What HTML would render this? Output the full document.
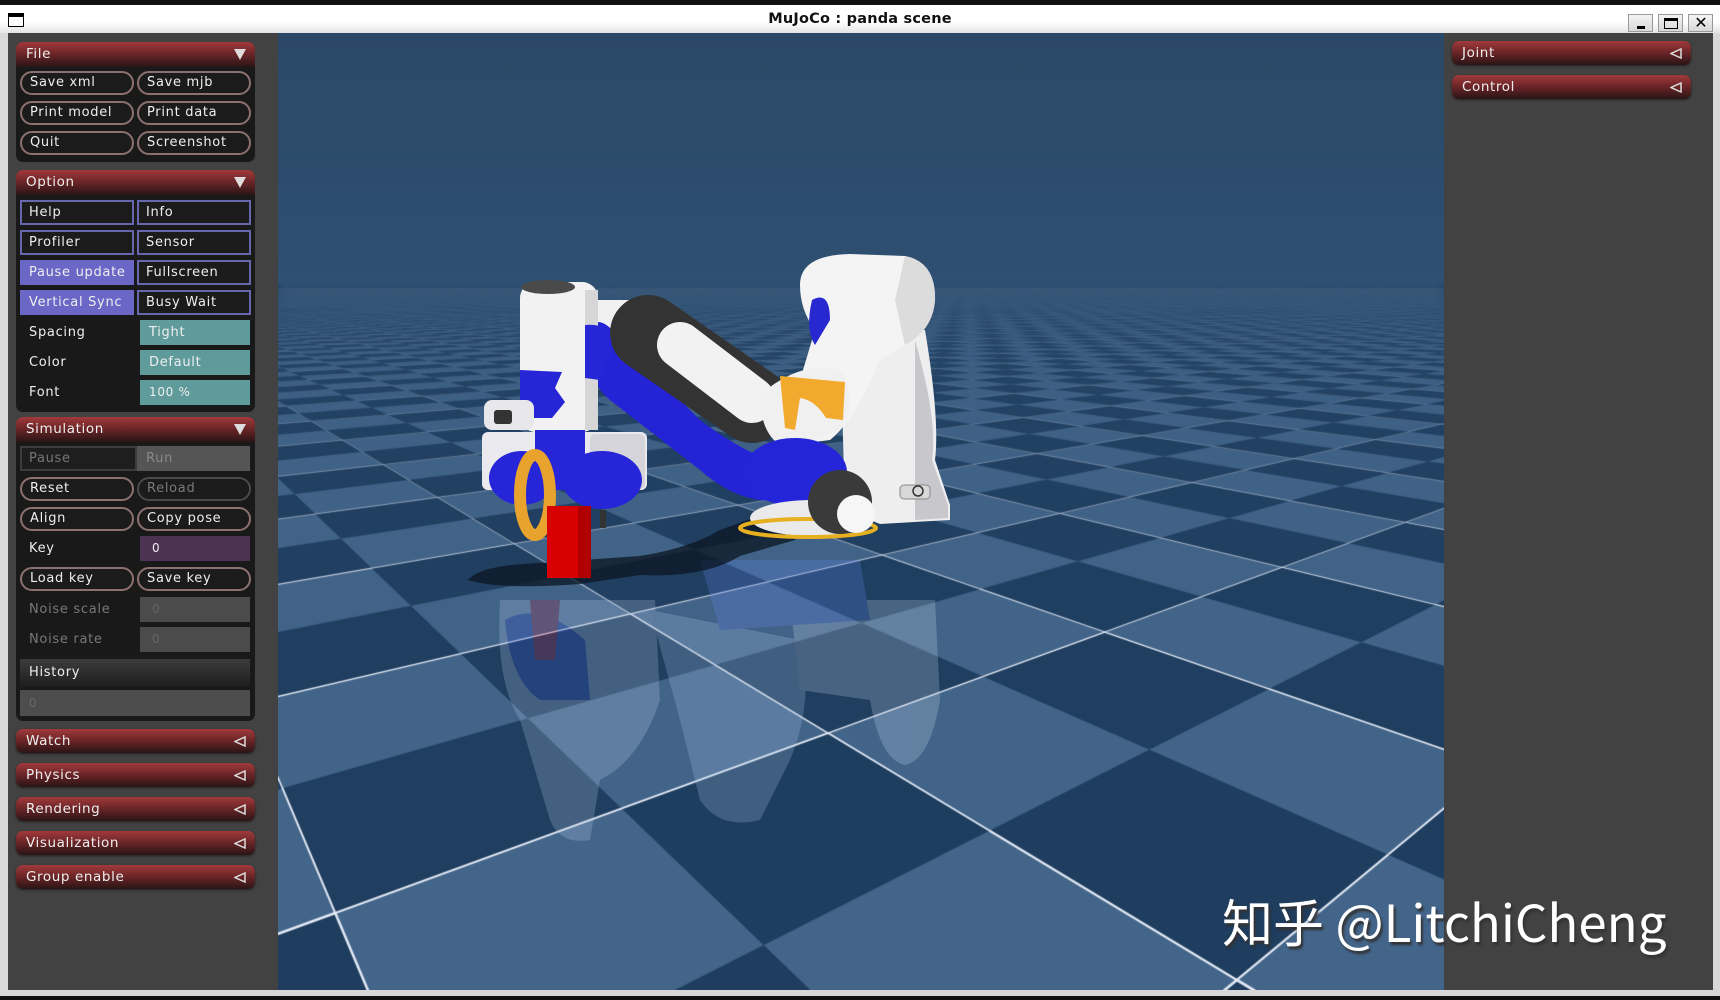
<!DOCTYPE html>
<html><head><meta charset="utf-8">
<style>
*{margin:0;padding:0;box-sizing:border-box}
body{width:1720px;height:1000px;overflow:hidden;background:#111;position:relative;font-family:"DejaVu Sans","Liberation Sans",sans-serif;}
.a{position:absolute}
#title{left:0;top:5px;width:1720px;height:28px;background:linear-gradient(#fff 60%,#e4e4e4);}
#title .t{position:absolute;left:0;width:1720px;top:6px;text-align:center;font-weight:bold;font-size:14.5px;color:#111;letter-spacing:0.2px}
.wb{position:absolute;top:9px;width:25px;height:18px;border:1px solid #999;background:linear-gradient(#f4f4f4,#d8d8d8)}
#frame{left:0;top:32px;width:1720px;height:964px;background:#d8d8d8}
#leftp{left:8px;top:33px;width:270px;height:957px;background:#424242}
#rightp{left:1444px;top:33px;width:269px;height:957px;background:#424242}
.sec{position:absolute;left:16px;width:239px;background:#191919;border-radius:7px}
.hd{position:absolute;height:25px;border-radius:7px 7px 0 0;background:linear-gradient(#a23a3c,#6e2628 45%,#2a1516);color:#eee;font-size:13.5px;letter-spacing:0.6px;padding-left:10px;line-height:25px}
.hc{border-radius:7px;height:24px;line-height:24px;box-shadow:0 1px 2px #222}
.tri{position:absolute;right:9px;top:7px}
.pb{position:absolute;height:24px;border:2px solid #8d7070;border-radius:12px;background:#1b1b1b;color:#eee;font-size:13px;letter-spacing:0.7px;padding-left:8px;line-height:20px;width:114px}
.cb{position:absolute;height:25px;border:2px solid #6767ae;background:#1b1b1b;color:#eee;font-size:13px;letter-spacing:0.7px;padding-left:7px;line-height:21px;width:114px}
.on{background:#6b67c6;border-color:#6b67c6}
.lb{position:absolute;left:29px;color:#eee;font-size:13px;letter-spacing:0.7px;height:25px;line-height:25px}
.tl{position:absolute;left:140px;width:110px;height:25px;background:#5f9b9b;color:#eee;font-size:13px;letter-spacing:0.7px;padding-left:9px;line-height:25px}
#vp{left:278px;top:33px;width:1166px;height:957px;overflow:hidden;background:linear-gradient(#2b4867 0,#2e4f71 236px,#2a4c70 300px,#2c5176 100%)}
#wm{left:1222px;top:890px;font-family:"Noto Sans CJK SC","Liberation Sans",sans-serif;font-size:51px;color:#fff;text-shadow:2px 3px 2px #333;white-space:nowrap;line-height:1.2}
</style></head><body>
<div class="a" id="frame"></div>
<div class="a" id="title"><svg class="a" style="left:8px;top:8px" width="16" height="14"><rect x="0.5" y="0.5" width="15" height="13" fill="#fff" stroke="#000"/><rect x="0" y="0" width="16" height="4" fill="#000"/></svg><div class="t">MuJoCo : panda scene</div>
<div class="wb" style="left:1628px"><div class="a" style="left:8px;top:11px;width:8px;height:3px;background:#000"></div></div>
<div class="wb" style="left:1658px"><div class="a" style="left:5px;top:3px;width:14px;height:11px;border:1px solid #000;border-top:3px solid #000"></div></div>
<div class="wb" style="left:1688px"><div class="a" style="left:0;top:-2px;width:24px;text-align:center;font-weight:bold;font-size:16px">✕</div></div>
</div>
<div class="a" id="leftp"></div>
<div class="a" id="rightp"></div>

<div class="a" id="vp"><canvas id="cv" width="1166" height="957" style="position:absolute;left:0;top:0"></canvas>
<svg class="a" style="left:0;top:0" width="1166" height="957" viewBox="278 33 1166 957">
<g opacity="0.22">
<path d="M500 600 L655 600 L660 700 Q640 760 600 780 L590 840 Q560 845 550 820 L520 720 Q495 680 500 600Z" fill="#c8dcf6"/>
<path d="M505 620 Q540 600 585 640 L590 700 L540 700 Q510 680 505 620Z" fill="#3a55e0"/>
<path d="M650 610 L800 640 Q815 700 790 760 L760 820 Q720 830 700 800 L680 720 Z" fill="#b8d0f0"/>
<path d="M790 600 L935 600 L940 700 Q930 760 905 765 Q880 760 870 700 L800 690Z" fill="#d8e6f8"/>
<path d="M530 600 L560 600 L555 660 L535 660Z" fill="#d02040"/>
<path d="M700 560 L860 560 L870 620 L720 630Z" fill="#6a8cff"/>
</g>
<path d="M468 580 Q480 565 540 563 L640 556 Q690 548 720 530 L770 512 L810 518 L795 540 L740 556 Q705 578 640 575 L580 584 Q500 590 468 580Z" fill="#0b1622" opacity="0.75"/>
<path d="M840 330 L925 330 Q940 420 935 460 L950 505 L950 520 L880 524 L845 510 Z" fill="#eeeeee"/>
<path d="M915 340 Q938 420 932 460 L948 505 L948 518 L915 520Z" fill="#c8c8cc"/>
<rect x="900" y="485" width="30" height="14" rx="4" fill="#d8d8d8" stroke="#888" stroke-width="1"/>
<circle cx="918" cy="491" r="5" fill="none" stroke="#333" stroke-width="1.5"/>
<path d="M800 285 Q800 255 850 254 L905 256 Q936 262 935 300 Q933 330 905 345 L880 360 Q855 420 830 440 L790 445 Q780 410 800 380 L815 330 Q800 310 800 285Z" fill="#f4f4f4"/>
<path d="M905 256 Q936 262 935 300 Q933 330 905 345 L895 300Z" fill="#dcdcdc"/>
<path d="M812 300 Q830 290 830 320 L815 345 Q805 330 812 300Z" fill="#2828d0"/>
<path d="M570 300 L640 300 L660 350 L600 380 L575 360Z" fill="#f0f0f0"/>
<path d="M585 330 Q600 310 620 340 L700 420 Q740 450 770 460 L780 500 Q740 505 700 470 L610 400 Q585 380 585 330Z" fill="#2424d6"/>
<line x1="648" y1="333" x2="752" y2="405" stroke="#333" stroke-width="76" stroke-linecap="round"/>
<line x1="680" y1="345" x2="752" y2="400" stroke="#f2f2f2" stroke-width="46" stroke-linecap="round"/>
<path d="M760 395 Q800 360 840 370 Q860 400 840 430 L790 450 Q760 440 760 395Z" fill="#f0f0f0"/>
<path d="M780 376 L845 382 L843 420 L826 418 Q815 400 800 398 L795 430 L785 428Z" fill="#f2aa2e"/>
<ellipse cx="795" cy="472" rx="52" ry="34" fill="#2424d8"/>
<ellipse cx="812" cy="518" rx="62" ry="18" fill="#eaeaea"/>
<ellipse cx="808" cy="528" rx="68" ry="9" fill="none" stroke="#e6b020" stroke-width="4"/>
<circle cx="840" cy="502" r="32" fill="#3a3a3a"/>
<circle cx="856" cy="514" r="19" fill="#f6f6f6"/>
<rect x="520" y="282" width="78" height="150" rx="16" fill="#f2f2f2"/>
<rect x="585" y="290" width="13" height="140" fill="#d6d6d6"/>
<ellipse cx="548" cy="287" rx="27" ry="7" fill="#4a4a4a"/>
<path d="M520 370 L562 372 L555 388 L565 402 L552 418 L520 418Z" fill="#2626d6"/>
<path d="M585 325 Q612 322 612 350 L600 380 L585 378Z" fill="#2626d6"/>
<rect x="484" y="400" width="50" height="30" rx="8" fill="#e8e8ec"/>
<rect x="494" y="410" width="18" height="14" rx="3" fill="#333"/>
<rect x="482" y="432" width="165" height="58" rx="6" fill="#e9e9ee"/>
<rect x="590" y="434" width="55" height="55" rx="5" fill="#d4d4da"/>
<ellipse cx="522" cy="478" rx="33" ry="27" fill="#2626d8"/>
<ellipse cx="602" cy="480" rx="40" ry="29" fill="#2626d8"/>
<rect x="535" y="430" width="50" height="60" fill="#2626d8"/>
<ellipse cx="535" cy="495" rx="15" ry="40" fill="none" stroke="#e8a22e" stroke-width="12"/>
<rect x="547" y="506" width="44" height="72" fill="#d80000"/>
<rect x="578" y="506" width="13" height="72" fill="#b00000"/>
<rect x="600" y="510" width="6" height="18" fill="#333"/>
</svg>
</div>

<div class="sec" style="top:42px;height:120px"></div>
<div class="hd" style="left:16px;top:42px;width:239px">File<svg class="tri" width="12" height="11"><path d="M0 0 H12 L6 11Z" fill="#ddd"/></svg></div>
<div class="pb" style="left:20px;top:71px">Save xml</div><div class="pb" style="left:137px;top:71px">Save mjb</div>
<div class="pb" style="left:20px;top:101px">Print model</div><div class="pb" style="left:137px;top:101px">Print data</div>
<div class="pb" style="left:20px;top:131px">Quit</div><div class="pb" style="left:137px;top:131px">Screenshot</div>

<div class="sec" style="top:170px;height:242px"></div>
<div class="hd" style="left:16px;top:170px;width:239px">Option<svg class="tri" width="12" height="11"><path d="M0 0 H12 L6 11Z" fill="#ddd"/></svg></div>
<div class="cb" style="left:20px;top:200px">Help</div><div class="cb" style="left:137px;top:200px">Info</div>
<div class="cb" style="left:20px;top:230px">Profiler</div><div class="cb" style="left:137px;top:230px">Sensor</div>
<div class="cb on" style="left:20px;top:260px">Pause update</div><div class="cb" style="left:137px;top:260px">Fullscreen</div>
<div class="cb on" style="left:20px;top:290px">Vertical Sync</div><div class="cb" style="left:137px;top:290px">Busy Wait</div>
<div class="lb" style="top:320px">Spacing</div><div class="tl" style="top:320px">Tight</div>
<div class="lb" style="top:350px">Color</div><div class="tl" style="top:350px">Default</div>
<div class="lb" style="top:380px">Font</div><div class="tl" style="top:380px;font-size:12px">100 %</div>

<div class="sec" style="top:417px;height:304px"></div>
<div class="hd" style="left:16px;top:417px;width:239px">Simulation<svg class="tri" width="12" height="11"><path d="M0 0 H12 L6 11Z" fill="#ddd"/></svg></div>
<div class="cb" style="left:20px;top:446px;width:117px;border-color:#3c3c3c;background:#1e1e1e;color:#777">Pause</div>
<div class="cb" style="left:137px;top:446px;width:113px;border-color:#555;background:#555;color:#888">Run</div>
<div class="pb" style="left:20px;top:477px">Reset</div><div class="pb" style="left:137px;top:477px;border-color:#4a4a4a;color:#7a7a7a">Reload</div>
<div class="pb" style="left:20px;top:507px">Align</div><div class="pb" style="left:137px;top:507px">Copy pose</div>
<div class="lb" style="top:536px">Key</div><div class="tl" style="top:536px;background:#4c3354;font-size:12px;padding-left:12px">0</div>
<div class="pb" style="left:20px;top:567px">Load key</div><div class="pb" style="left:137px;top:567px">Save key</div>
<div class="lb" style="top:597px;color:#787878">Noise scale</div><div class="tl" style="top:597px;background:#4b4b4b;color:#666;font-size:12px;padding-left:12px">0</div>
<div class="lb" style="top:627px;color:#787878">Noise rate</div><div class="tl" style="top:627px;background:#4b4b4b;color:#666;font-size:12px;padding-left:12px">0</div>
<div class="a" style="left:20px;top:659px;width:230px;height:28px;background:linear-gradient(#3c3c3c,#1e1e1e);color:#eee;font-size:13px;letter-spacing:0.7px;padding-left:9px;line-height:28px">History</div>
<div class="a" style="left:20px;top:690px;width:230px;height:26px;background:#4d4d4d;color:#666;font-size:12px;padding-left:9px;line-height:26px">0</div>

<div class="hd hc" style="left:16px;top:729px;width:239px">Watch<svg class="tri" width="12" height="11" style="top:7px"><path d="M11 1 V10 L1 5.5Z" fill="none" stroke="#ddd" stroke-width="1.5"/></svg></div>
<div class="hd hc" style="left:16px;top:763px;width:239px">Physics<svg class="tri" width="12" height="11" style="top:7px"><path d="M11 1 V10 L1 5.5Z" fill="none" stroke="#ddd" stroke-width="1.5"/></svg></div>
<div class="hd hc" style="left:16px;top:797px;width:239px">Rendering<svg class="tri" width="12" height="11" style="top:7px"><path d="M11 1 V10 L1 5.5Z" fill="none" stroke="#ddd" stroke-width="1.5"/></svg></div>
<div class="hd hc" style="left:16px;top:831px;width:239px">Visualization<svg class="tri" width="12" height="11" style="top:7px"><path d="M11 1 V10 L1 5.5Z" fill="none" stroke="#ddd" stroke-width="1.5"/></svg></div>
<div class="hd hc" style="left:16px;top:865px;width:239px">Group enable<svg class="tri" width="12" height="11" style="top:7px"><path d="M11 1 V10 L1 5.5Z" fill="none" stroke="#ddd" stroke-width="1.5"/></svg></div>

<div class="hd hc" style="left:1452px;top:41px;width:239px">Joint<svg class="tri" width="12" height="11" style="top:7px"><path d="M11 1 V10 L1 5.5Z" fill="none" stroke="#ddd" stroke-width="1.5"/></svg></div>
<div class="hd hc" style="left:1452px;top:75px;width:239px">Control<svg class="tri" width="12" height="11" style="top:7px"><path d="M11 1 V10 L1 5.5Z" fill="none" stroke="#ddd" stroke-width="1.5"/></svg></div>

<div class="a" id="wm">知乎 @LitchiCheng</div>

<script>
(function(){
var cv=document.getElementById('cv');var g=cv.getContext('2d');
var cx=583,hy=239,f=990,t=0.4805,s=0.627,c=0.779,X0=-0.0716,Z0=2.147;
function P(u,v){var X=X0+t*(c*u-s*v),Z=Z0+t*(s*u+c*v);return [cx+f*X/Z,hy+f/Z,Z];}
var D=[30,61,95],L=[67,101,138],F=[47,80,114];
var gr=g.createLinearGradient(0,hy,0,hy+80);gr.addColorStop(0,'rgb(46,80,114)');gr.addColorStop(1,'rgb(48,81,116)');
g.fillStyle=gr;g.fillRect(0,hy,1166,960);
function mix(a,b,k){return 'rgb('+Math.round(a[0]+(b[0]-a[0])*k)+','+Math.round(a[1]+(b[1]-a[1])*k)+','+Math.round(a[2]+(b[2]-a[2])*k)+')';}
var N=200;
for(var u=-N;u<N;u++){for(var v=-N;v<N;v++){
 var p1=P(u,v),p2=P(u+1,v),p3=P(u+1,v+1),p4=P(u,v+1);
 if(p1[2]<0.3||p2[2]<0.3||p3[2]<0.3||p4[2]<0.3)continue;
 var mx=Math.max(p1[0],p2[0],p3[0],p4[0]),mn=Math.min(p1[0],p2[0],p3[0],p4[0]),my=Math.max(p1[1],p2[1],p3[1],p4[1]),mny=Math.min(p1[1],p2[1],p3[1],p4[1]);
 if(mx<0||mn>1166||mny>960||my<hy)continue;
 var Z=(p1[2]+p3[2])/2;var k=1-Math.exp(-(Z-1.2)/22);if(k<0)k=0;
 g.fillStyle=mix(((u+v)&1)?L:D,F,k);
 g.beginPath();g.moveTo(p1[0],p1[1]);g.lineTo(p2[0],p2[1]);g.lineTo(p3[0],p3[1]);g.lineTo(p4[0],p4[1]);g.closePath();g.fill();
 g.strokeStyle=g.fillStyle;g.lineWidth=0.6;g.stroke();
}}
function seg(a,b){var Z=(a[2]+b[2])/2;if(Z<0.3)return;var al=Math.min(1,2.6/Z)*0.95;if(al<0.04)return;
 g.strokeStyle='rgba(235,240,250,'+al+')';g.lineWidth=Math.max(0.4,3.4/Z);g.beginPath();g.moveTo(a[0],a[1]);g.lineTo(b[0],b[1]);g.stroke();}
for(var i=-N;i<=N;i+=2){for(var j=-N;j<N;j++){seg(P(i,j),P(i,j+1));seg(P(j,i),P(j+1,i));}}
})();
</script>
</body></html>
